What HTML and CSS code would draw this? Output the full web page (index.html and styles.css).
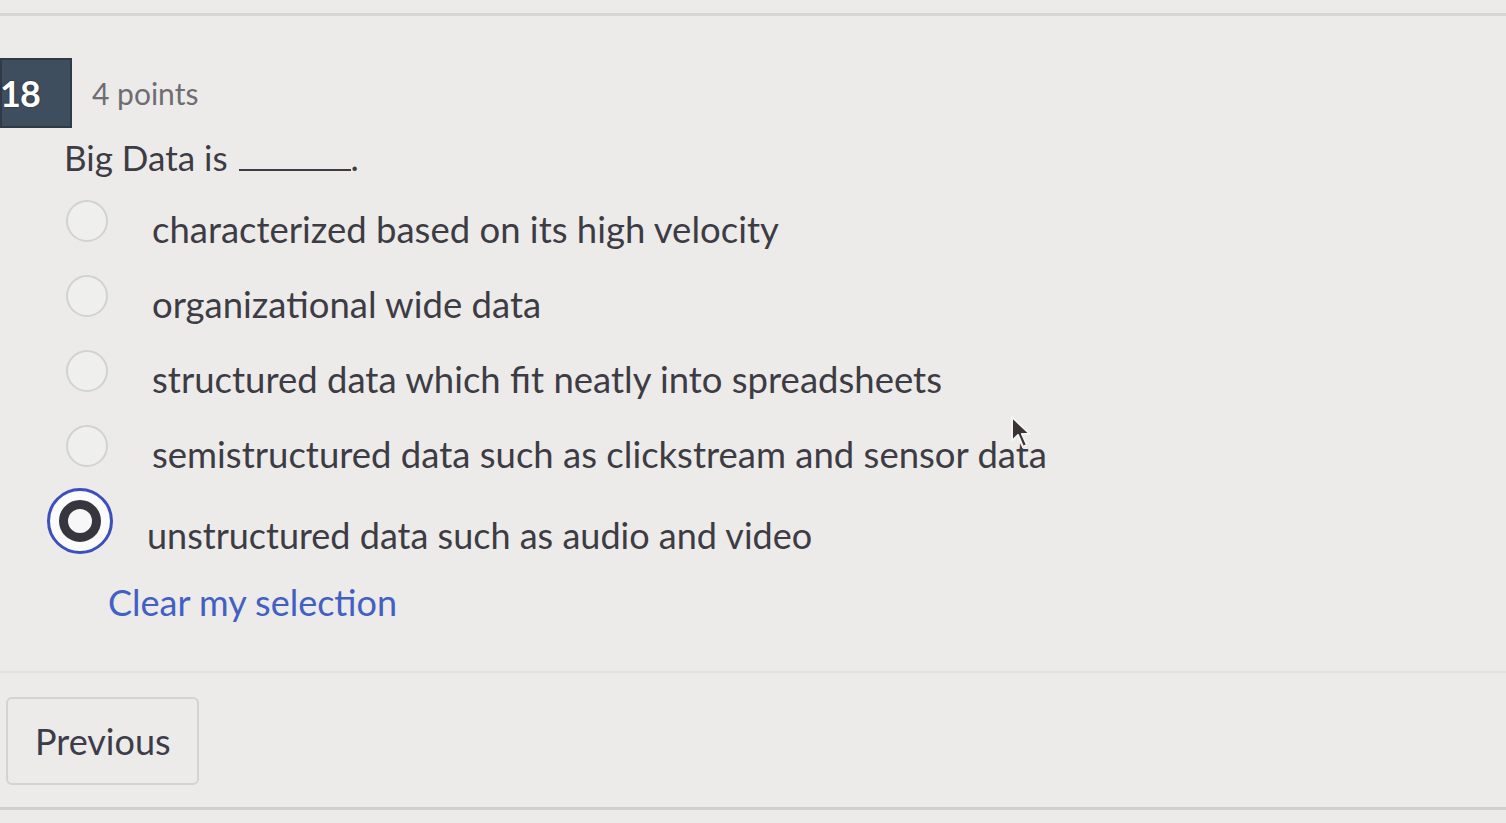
FILE: index.html
```html
<!DOCTYPE html>
<html>
<head>
<meta charset="utf-8">
<link rel="stylesheet" href="styles.css">
</head>
<body>
<div class="page">
  <div class="topline"></div>
  <div class="qhead">
    <div class="qnum">18</div>
    <div class="points">4 points</div>
  </div>
  <div class="qbody">
    <div class="prompt">Big Data is <span class="blank"></span>.</div>
    <div class="options">
      <label class="opt"><span class="radio"></span><span class="otext">characterized based on its high velocity</span></label>
      <label class="opt"><span class="radio"></span><span class="otext">organizational wide data</span></label>
      <label class="opt"><span class="radio"></span><span class="otext">structured data which fit neatly into spreadsheets</span></label>
      <label class="opt"><span class="radio"></span><span class="otext">semistructured data such as clickstream and sensor data</span></label>
      <label class="opt sel"><span class="radio"><span class="dot"></span></span><span class="otext">unstructured data such as audio and video</span></label>
    </div>
    <div class="clear">Clear my selection</div>
  </div>
  <div class="sep"></div>
  <div class="nav">
    <button class="btn">Previous</button>
  </div>
  <div class="bottomline"></div>
</div>
<svg class="cursor" width="24" height="36" viewBox="0 0 24 36">
  <path d="M2 2 L2 26 L8 20 L13 32 L17 30 L12 19 L20 19 Z" fill="#3a3336" stroke="#f4f4f4" stroke-width="2" stroke-linejoin="round"/>
</svg>
</body>
</html>
```
FILE: styles.css
```css
html, body {
  margin: 0;
  padding: 0;
  background: #ecebe9;
}
body {
  font-family: Lato, "Open Sans", sans-serif;
  color: #3d3c44;
  width: 1506px;
  height: 823px;
  overflow: hidden;
  position: relative;
}
.page {
  display: flex;
  flex-direction: column;
  height: 823px;
}
.topline {
  margin-top: 13px;
  height: 3px;
  background: #d6d6d6;
}
.qhead {
  display: flex;
  align-items: center;
  margin-top: 42px;
}
.qnum {
  width: 72px;
  height: 70px;
  background: #3f4e5f;
  box-shadow: inset 0 0 0 2px #2f3a46;
  color: #fff;
  font-weight: 700;
  font-size: 36px;
  display: flex;
  align-items: center;
  box-sizing: border-box;
  text-shadow: 0 0 2px #222;
  letter-spacing: -1px;
}
.points {
  margin-left: 20px;
  font-size: 30px;
  color: #6e6d73;
}
.qbody {
  padding-left: 64px;
}
.prompt {
  font-size: 35px;
  margin-top: 8px;
  line-height: 42px;
}
.blank {
  display: inline-block;
  width: 112px;
  border-bottom: 2px solid #3d3c44;
  vertical-align: baseline;
  margin-left: 2px;
}
.options {
  display: flex;
  flex-direction: column;
  margin-top: 5px;
}
.opt {
  display: flex;
  align-items: center;
  height: 75px;
  flex: none;
}
.radio {
  width: 42px;
  height: 42px;
  border: 2px solid #d2d2d2;
  border-radius: 50%;
  box-sizing: border-box;
  background: #efefed;
  flex: none;
  margin-left: 2px;
  display: flex;
  align-items: center;
  justify-content: center;
}
.otext {
  margin-left: 44px;
  padding-top: 16px;
  font-size: 36.5px;
  color: #3d3c44;
}
.opt.sel .radio {
  width: 66px;
  height: 66px;
  margin-left: -17px;
  border: 3px solid #3b4fbf;
  background: #fbfbfb;
}
.opt.sel .dot {
  width: 42px;
  height: 42px;
  border-radius: 50%;
  border: 9px solid #37353d;
  box-sizing: border-box;
  background: #f7f7f7;
}
.opt.sel .otext {
  margin-left: 34px;
  padding-top: 28px;
  font-size: 36px;
}
.clear {
  margin-left: 44px;
  margin-top: 22px;
  font-size: 36px;
  color: #4260c4;
}
.sep {
  margin-top: 47px;
  height: 2px;
  background: #e3e2e0;
  flex: none;
}
.nav {
  padding-left: 6px;
  margin-top: 24px;
  flex: none;
}
.btn {
  width: 193px;
  height: 88px;
  border: 2px solid #d4d3d1;
  border-radius: 6px;
  background: #ecebe9;
  font-family: Lato, "Open Sans", sans-serif;
  font-size: 36px;
  color: #3d3c4a;
  text-align: left;
  padding-left: 27px;
}
.bottomline {
  margin-top: 22px;
  height: 3px;
  background: #cfcfcf;
  flex: none;
}
.cursor {
  position: absolute;
  left: 1010px;
  top: 415px;
}
```
